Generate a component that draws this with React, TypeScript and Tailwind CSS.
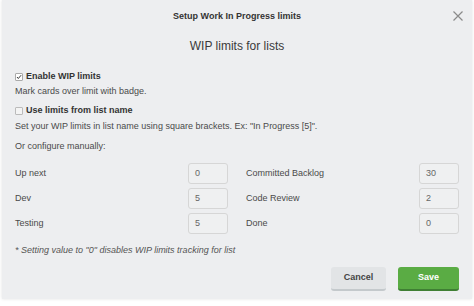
import React from "react";

const rowsL = [
  ["Up next", "0"],
  ["Dev", "5"],
  ["Testing", "5"],
];
const rowsR = [
  ["Committed Backlog", "30"],
  ["Code Review", "2"],
  ["Done", "0"],
];

function Row({ label, value }: { label: string; value: string }) {
  return (
    <div className="flex items-center justify-between h-[21px]">
      <span>{label}</span>
      <div className="w-[40px] h-[21px] border border-[#d6d6d6] bg-[#eff0f1] rounded-[3px] pl-[6px] flex items-center text-[#666]">
        {value}
      </div>
    </div>
  );
}

export default function App() {
  return (
    <div className="w-[474px] h-[306px] bg-white" style={{ fontFamily: '"Liberation Sans", Arial, sans-serif' }}>
      <div className="relative h-[299px] ml-[2px] mr-[2px] bg-[#edeef0] shadow-[0_0_3px_rgba(0,0,0,0.12)] text-[9px] text-[#4a4a4a]">
        <div className="h-[33px] flex items-center justify-center font-bold text-[#333] text-[9px]">
          Setup Work In Progress limits
        </div>
        <div className="absolute right-[8px] top-[10px] w-[12px] h-[12px]">
          <svg viewBox="0 0 12 12" width="12" height="12">
            <path d="M1.5 1.5L10.5 10.5M10.5 1.5L1.5 10.5" stroke="#8a8a8a" strokeWidth="1.2" />
          </svg>
        </div>
        <div className="text-center text-[12px] text-[#3a3a3a] leading-[18px] mt-[4px]">WIP limits for lists</div>
        <div className="px-[13px] pt-[15px]">
          <div className="flex items-center gap-[3px] h-[14px]">
            <div className="w-[8px] h-[8px] border border-[#aaa] bg-white rounded-[1px] flex items-center justify-center">
              <svg viewBox="0 0 8 8" width="8" height="8">
                <path d="M1.3 4L3.1 6L6.8 1.6" stroke="#333" strokeWidth="1.3" fill="none" />
              </svg>
            </div>
            <span className="font-bold text-[#333]">Enable WIP limits</span>
          </div>
          <div className="leading-[14px]">Mark cards over limit with badge.</div>
          <div className="flex items-center gap-[3px] h-[14px] mt-[6px]">
            <div className="w-[8px] h-[8px] border border-[#bbb] bg-[#f4f4f4] rounded-[1px]" />
            <span className="font-bold text-[#333]">Use limits from list name</span>
          </div>
          <div className="mt-[1px] leading-[14px]">Set your WIP limits in list name using square brackets. Ex: "In Progress [5]".</div>
          <div className="mt-[6px] leading-[14px]">Or configure manually:</div>
          <div className="grid grid-cols-2 gap-x-[18px] mt-[10px]">
            <div className="flex flex-col gap-[4px]">
              {rowsL.map(([l, v]) => (
                <Row key={l} label={l} value={v} />
              ))}
            </div>
            <div className="flex flex-col gap-[4px]">
              {rowsR.map(([l, v]) => (
                <Row key={l} label={l} value={v} />
              ))}
            </div>
          </div>
          <div className="italic mt-[9px] leading-[14px] text-[#555]">* Setting value to "0" disables WIP limits tracking for list</div>
          <div className="flex justify-end gap-[12px] mt-[10px]">
            <div className="w-[55px] h-[24px] rounded-[3px] bg-[#e2e4e6] border-b-[2px] border-[#c4c9cc] flex items-center justify-center font-bold text-[#444] text-[9px]">
              Cancel
            </div>
            <div className="w-[61px] h-[24px] rounded-[3px] bg-[#5aac44] border-b-[2px] border-[#3f7f34] flex items-center justify-center font-bold text-white text-[9px]">
              Save
            </div>
          </div>
        </div>
      </div>
    </div>
  );
}
